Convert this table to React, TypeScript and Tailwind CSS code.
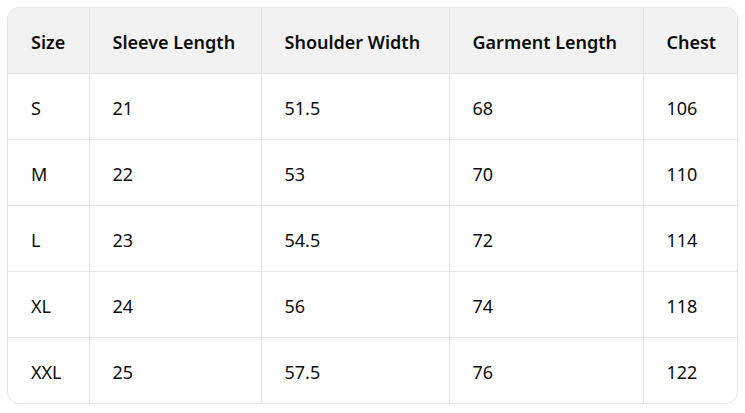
const headers = ['Size', 'Sleeve Length', 'Shoulder Width', 'Garment Length', 'Chest'];

const rows = [
  ['S', '21', '51.5', '68', '106'],
  ['M', '22', '53', '70', '110'],
  ['L', '23', '54.5', '72', '114'],
  ['XL', '24', '56', '74', '118'],
  ['XXL', '25', '57.5', '76', '122'],
];

// column widths measured off the screenshot
const widths = ['w-[81px]', 'w-[172px]', 'w-[188px]', 'w-[194px]', ''];

export default function App() {
  return (
    <div className="bg-white p-[7px] font-['Noto_Sans','Open_Sans',sans-serif] text-[18px] leading-[24px] text-[#0d0d0d]">
      <div className="overflow-hidden rounded-[12px] border border-[#e5e5e5]">
        <table className="w-full table-fixed border-collapse">
          <thead>
            <tr className="h-[65px] bg-[#f2f2f2]">
              {headers.map((h, i) => (
                <th
                  key={h}
                  className={`${widths[i]} border-b border-[#e5e5e5] pl-[23px] pr-[20px] pt-[3px] text-left font-semibold ${i > 0 ? 'border-l' : ''}`}
                >
                  {h}
                </th>
              ))}
            </tr>
          </thead>
          <tbody>
            {rows.map((r, ri) => (
              <tr key={r[0]} className="h-[66px]">
                {r.map((c, ci) => (
                  <td
                    key={ci}
                    className={`border-[#e5e5e5] pl-[23px] pr-[20px] pt-[3px] ${ci > 0 ? 'border-l' : ''} ${ri < rows.length - 1 ? 'border-b' : ''}`}
                  >
                    {c}
                  </td>
                ))}
              </tr>
            ))}
          </tbody>
        </table>
      </div>
    </div>
  );
}
